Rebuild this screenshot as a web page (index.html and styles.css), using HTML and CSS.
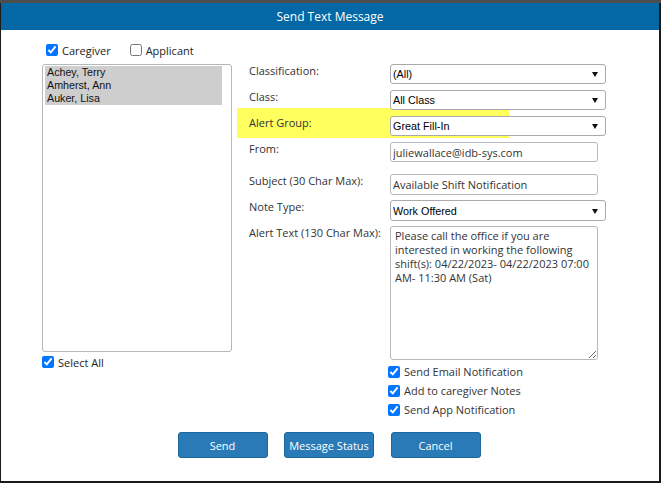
FILE: index.html
```html
<!DOCTYPE html>
<html>
<head>
<meta charset="utf-8">
<title>Send Text Message</title>
<link rel="stylesheet" href="styles.css">
</head>
<body>
<div class="topbar"></div>
<div class="dialog">
  <header class="title">Send Text Message</header>
  <div class="main">
    <div class="leftcol">
      <div class="typerow">
        <label class="chk"><input type="checkbox" checked><span>Caregiver</span></label>
        <label class="chk"><input type="checkbox"><span>Applicant</span></label>
      </div>
      <div class="listbox">
        <div class="opt sel">Achey, Terry</div>
        <div class="opt sel">Amherst, Ann</div>
        <div class="opt sel">Auker, Lisa</div>
      </div>
      <label class="chk selall"><input type="checkbox" checked><span>Select All</span></label>
    </div>
    <div class="rightcol">
      <div class="row r-class">
        <span class="lbl">Classification:</span>
        <span class="selwrap"><select class="sel-ctl"><option>(All)</option></select></span>
      </div>
      <div class="row r-klass">
        <span class="lbl">Class:</span>
        <span class="selwrap"><select class="sel-ctl"><option>All Class</option></select></span>
      </div>
      <div class="row r-alert">
        <span class="lbl">Alert Group:</span>
        <span class="selwrap"><select class="sel-ctl"><option>Great Fill-In</option></select></span>
      </div>
      <div class="row r-from">
        <span class="lbl">From:</span>
        <input class="txt" type="text" value="juliewallace@idb-sys.com">
      </div>
      <div class="row r-subj">
        <span class="lbl">Subject (30 Char Max):</span>
        <input class="txt" type="text" value="Available Shift Notification">
      </div>
      <div class="row r-note">
        <span class="lbl">Note Type:</span>
        <span class="selwrap"><select class="sel-ctl"><option>Work Offered</option></select></span>
      </div>
      <div class="row r-text">
        <span class="lbl">Alert Text (130 Char Max):</span>
        <textarea class="area">Please call the office if you are interested in working the following shift(s): 04/22/2023- 04/22/2023 07:00 AM- 11:30 AM (Sat)</textarea>
      </div>
      <div class="opts">
        <label class="chk"><input type="checkbox" checked><span>Send Email Notification</span></label>
        <label class="chk"><input type="checkbox" checked><span>Add to caregiver Notes</span></label>
        <label class="chk"><input type="checkbox" checked><span>Send App Notification</span></label>
      </div>
    </div>
  </div>
  <div class="footer">
    <button class="btn">Send</button>
    <button class="btn">Message Status</button>
    <button class="btn">Cancel</button>
  </div>
</div>
</body>
</html>
```
FILE: styles.css
```css
html, body {
  margin: 0;
  padding: 0;
  background: #ffffff;
}
body {
  width: 661px;
  height: 483px;
  overflow: hidden;
  font-family: "Open Sans", "Liberation Sans", sans-serif;
  font-size: 11px;
  color: #333333;
}
.topbar {
  height: 3px;
  background: #4d4d4d;
}
.dialog {
  box-sizing: border-box;
  width: 661px;
  height: 480px;
  border-left: 1px solid #1a1a1a;
  border-right: 2px solid #1a1a1a;
  border-bottom: 2px solid #1a1a1a;
  background: #ffffff;
}
.title {
  height: 27px;
  line-height: 27px;
  background: #0568a6;
  color: #ffffff;
  text-align: center;
  font-size: 12px;
}
.main {
  display: flex;
}
.leftcol {
  width: 236px;
  box-sizing: border-box;
  padding-left: 41px;
  padding-top: 10px;
}
.chk {
  display: flex;
  align-items: center;
  gap: 4px;
  white-space: nowrap;
}
.chk input {
  width: 12px;
  height: 12px;
  margin: 0;
  accent-color: #0075ff;
}
.typerow {
  display: flex;
  height: 20px;
  align-items: center;
  padding-left: 4px;
  gap: 19px;
  font-size: 11px;
  color: #222;
}
.listbox {
  box-sizing: border-box;
  width: 190px;
  height: 288px;
  margin-top: 4px;
  border: 1px solid #b4b8b8;
  border-radius: 3px;
  padding: 1px 9px 0 2px;
  font-family: "Liberation Sans", Arial, sans-serif;
  font-size: 10.7px;
  color: #111;
}
.opt {
  height: 13px;
  line-height: 13px;
  padding-left: 2px;
}
.opt.sel {
  background: #cecece;
}
.selall {
  height: 20px;
  color: #222;
}
.rightcol {
  width: 422px;
  padding-top: 34px;
  display: flex;
  flex-direction: column;
}
.row {
  display: flex;
  align-items: flex-start;
  padding-left: 12px;
}
.lbl {
  width: 141px;
  flex: none;
  line-height: 14px;
  color: #333;
}
.r-klass { margin-top: 6px; }
.r-alert {
  margin-top: -2px;
  padding-top: 8px;
  padding-bottom: 2px;
  background: linear-gradient(to right, #ffff5e 272px, transparent 272px);
}
.r-from { margin-top: 4px; }
.r-subj { margin-top: 12px; }
.r-note { margin-top: 5px; }
.r-text { margin-top: 5px; }
.selwrap {
  position: relative;
  display: block;
  width: 216px;
  height: 20px;
}
.selwrap::after {
  content: "";
  position: absolute;
  right: 8px;
  top: 8px;
  border-left: 3px solid transparent;
  border-right: 3px solid transparent;
  border-top: 5px solid #111;
}
.sel-ctl {
  appearance: none;
  -webkit-appearance: none;
  box-sizing: border-box;
  width: 216px;
  height: 20px;
  margin: 0;
  padding: 0 14px 0 2px;
  border: 1px solid #aaaaaa;
  border-radius: 3px;
  background: #ffffff;
  font-family: "Liberation Sans", Arial, sans-serif;
  font-size: 10.8px;
  color: #000;
  outline: none;
}
.r-note .selwrap, .r-note .sel-ctl { height: 21px; }
.r-note .selwrap::after { top: 8.5px; }
.txt {
  box-sizing: border-box;
  width: 208px;
  height: 20px;
  margin: 0;
  padding: 0 2px;
  border: 1px solid #b8b8b8;
  border-radius: 3px;
  font-family: "Open Sans", sans-serif;
  font-size: 11px;
  color: #333;
  outline: none;
}
.r-subj .txt { height: 21px; }
.area {
  box-sizing: border-box;
  width: 208px;
  height: 134px;
  margin: 0;
  padding: 2px 4px;
  border: 1px solid #b8b8b8;
  border-radius: 3px;
  font-family: "Open Sans", sans-serif;
  font-size: 11px;
  line-height: 14px;
  color: #333;
  outline: none;
  resize: vertical;
}
.opts {
  margin-top: 2px;
  padding-left: 151px;
  display: flex;
  flex-direction: column;
}
.opts .chk {
  height: 19px;
}
.footer {
  display: flex;
  justify-content: center;
  gap: 16.5px;
  margin-top: 13px;
  padding-right: 2px;
}
.btn {
  box-sizing: border-box;
  width: 90px;
  height: 26px;
  margin: 0;
  padding: 0;
  border: 1px solid #1d679f;
  border-radius: 3px;
  background: #2a7ab8;
  color: #ffffff;
  font-family: "Open Sans", sans-serif;
  font-size: 11px;
}
```
